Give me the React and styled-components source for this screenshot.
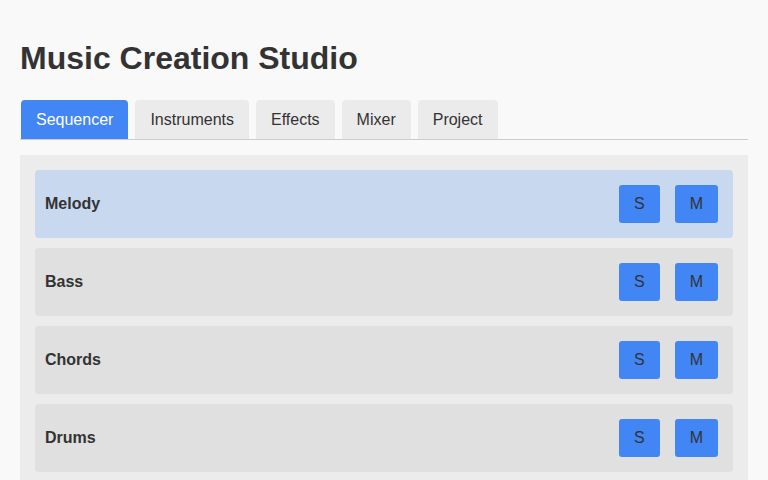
import React, { useState } from "react";
import styled, { createGlobalStyle } from "styled-components";

const Global = createGlobalStyle`
  html, body { margin: 0; padding: 0; background: #f9f9f9; }
  body { font-family: "Liberation Sans", Arial, sans-serif; color: #333; }
`;

const Page = styled.div`
  padding: 20px;
`;

const Title = styled.h1`
  margin: 20px 0 23px;
  font-size: 32px;
  font-weight: bold;
  color: #333;
  line-height: 37px;
`;

const TabBar = styled.div`
  display: flex;
  gap: 7px;
  padding-left: 1px;
  border-bottom: 1px solid #ccc;
`;

const Tab = styled.button`
  font-family: inherit;
  font-size: 16px;
  line-height: 19px;
  padding: 10px 15px;
  border: none;
  border-radius: 4px 4px 0 0;
  background: ${(p) => (p.$active ? "#4285f4" : "#ebebeb")};
  color: ${(p) => (p.$active ? "#fff" : "#333")};
  cursor: pointer;
`;

const Panel = styled.div`
  margin-top: 15px;
  background: #ececec;
  padding: 15px;
  display: flex;
  flex-direction: column;
  gap: 10px;
`;

const Track = styled.div`
  display: flex;
  align-items: center;
  justify-content: space-between;
  padding: 15px 15px 15px 10px;
  border-radius: 4px;
  background: ${(p) => (p.$selected ? "#c8d8ef" : "#e0e0e0")};
`;

const TrackName = styled.span`
  font-weight: bold;
  font-size: 16px;
`;

const Controls = styled.div`
  display: flex;
  gap: 15px;
`;

const CtrlButton = styled.button`
  font-family: inherit;
  font-size: 16px;
  line-height: 18px;
  padding: 10px 15px;
  border: none;
  border-radius: 3px;
  background: #4285f4;
  color: #333;
  cursor: pointer;
`;

const tabs = ["Sequencer", "Instruments", "Effects", "Mixer", "Project"];
const tracks = ["Melody", "Bass", "Chords", "Drums"];

export default function App() {
  const [active, setActive] = useState(0);
  const [selected, setSelected] = useState(0);
  return (
    <Page>
      <Global />
      <Title>Music Creation Studio</Title>
      <TabBar>
        {tabs.map((t, i) => (
          <Tab key={t} $active={i === active} onClick={() => setActive(i)}>
            {t}
          </Tab>
        ))}
      </TabBar>
      <Panel>
        {tracks.map((t, i) => (
          <Track key={t} $selected={i === selected} onClick={() => setSelected(i)}>
            <TrackName>{t}</TrackName>
            <Controls>
              <CtrlButton>S</CtrlButton>
              <CtrlButton>M</CtrlButton>
            </Controls>
          </Track>
        ))}
      </Panel>
    </Page>
  );
}
